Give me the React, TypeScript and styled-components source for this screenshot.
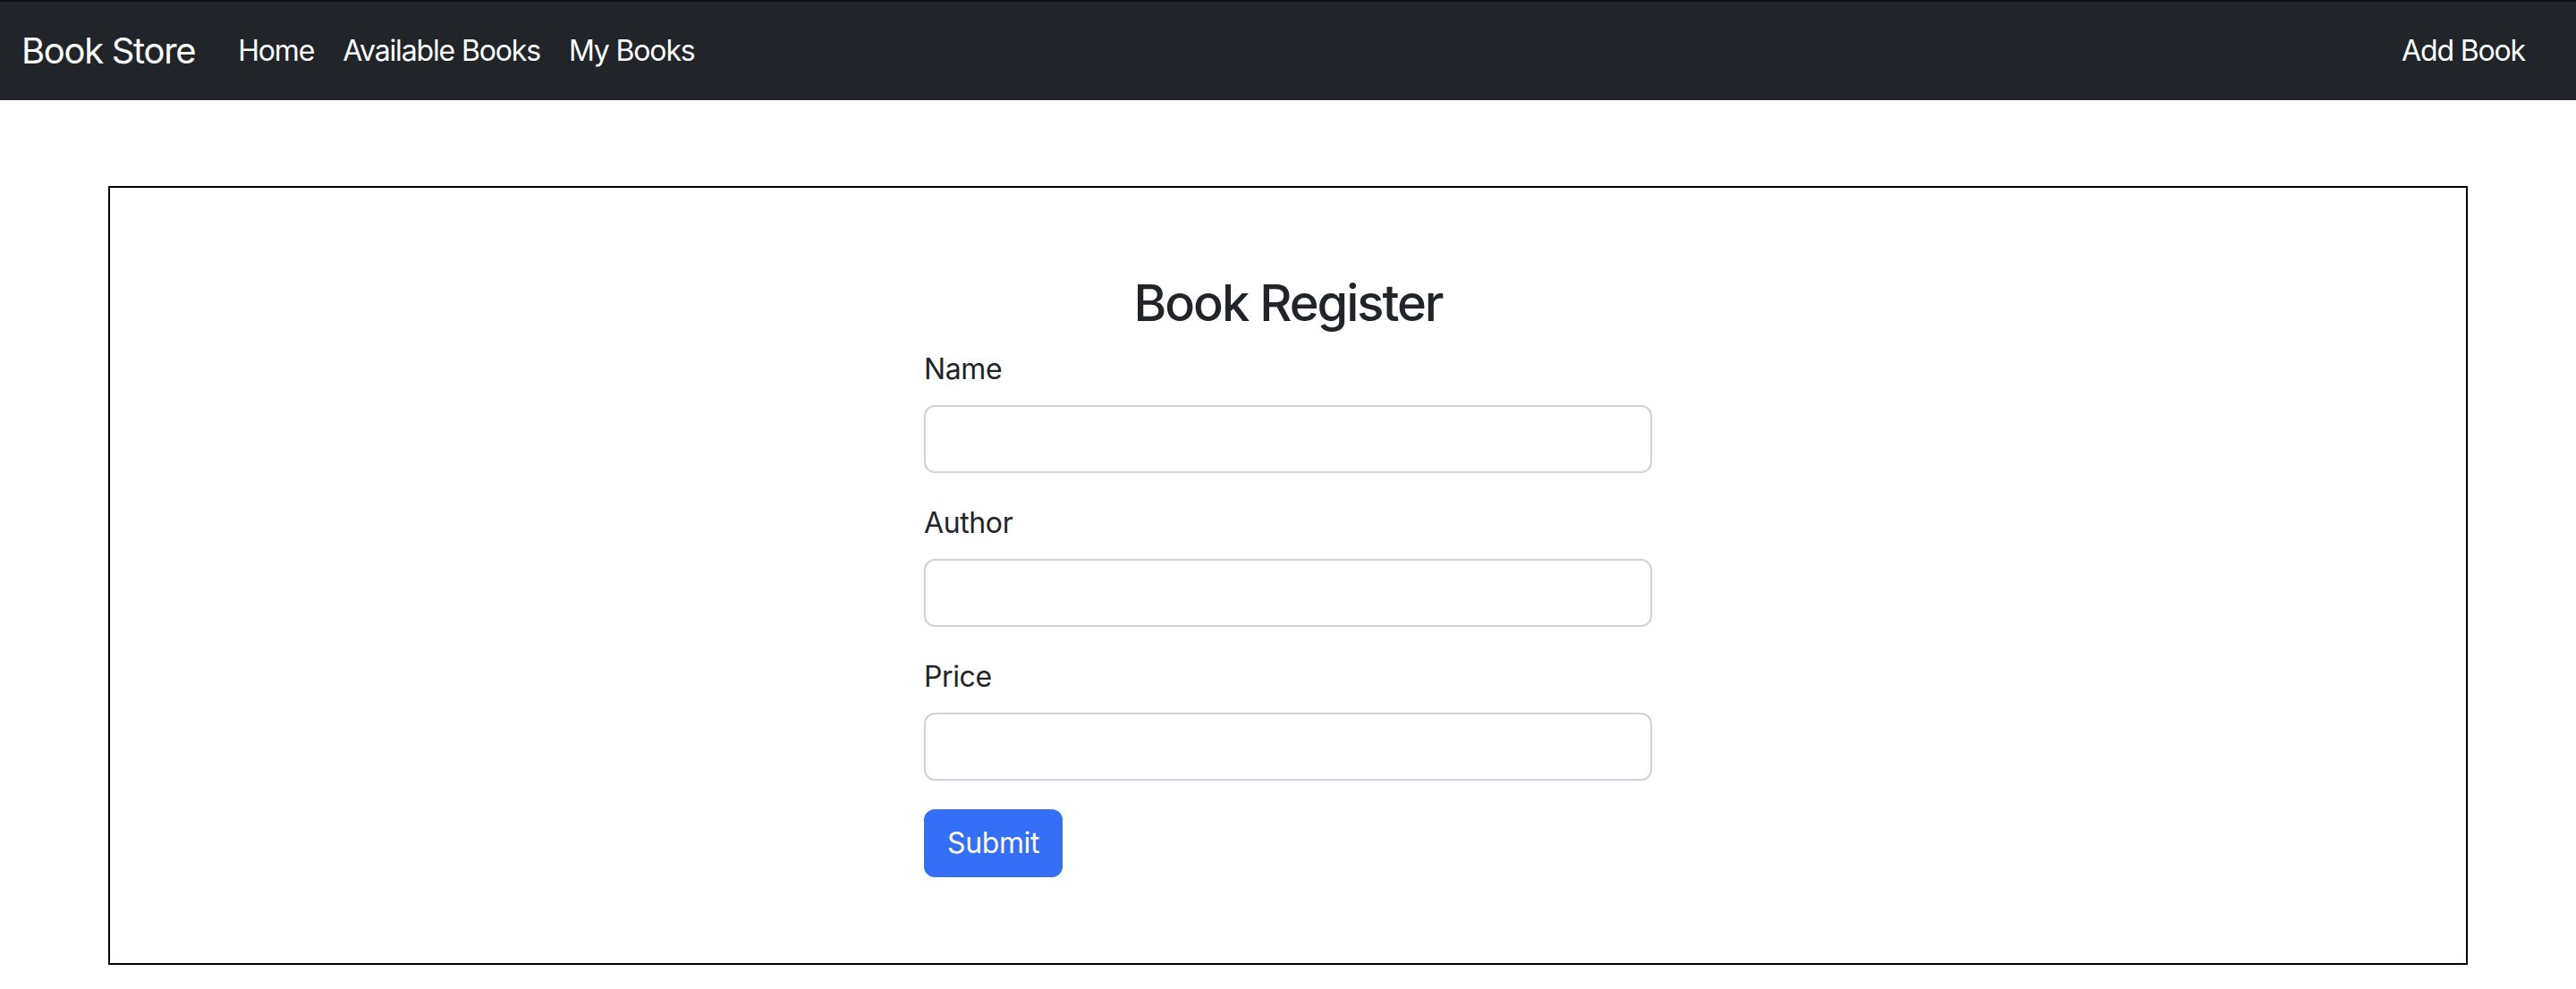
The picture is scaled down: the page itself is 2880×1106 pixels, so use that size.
import React from "react";
import styled, {createGlobalStyle} from "styled-components";

const GlobalStyle = createGlobalStyle`
  body {
    margin: 0;
    background: #fff;
    color: #212529;
    font-family: Inter, "Noto Sans", "Liberation Sans", sans-serif;
    letter-spacing: -0.024em;
  }
  * {
    box-sizing: border-box;
  }
`;

const NavbarSC = styled("nav")`
  height: 112px;
  background: #212529;
  border-top: 2px solid #101214;
  display: flex;
  align-items: center;
  padding: 0 24px;
`;

const BrandSC = styled("a")`
  font-size: 40px;
  line-height: 60px;
  letter-spacing: -0.033em;
  color: #fff;
  text-decoration: none;
  margin-right: 32px;
`;

const NavListSC = styled("ul")<{ $right?: boolean }>`
  display: flex;
  list-style: none;
  margin: 0;
  padding: 0;
  margin-left: ${p => (p.$right ? "auto" : "0")};
  margin-right: ${p => (p.$right ? "17px" : "0")};
`;

const NavLinkSC = styled("a")`
  display: block;
  padding: 16px;
  font-size: 32px;
  line-height: 48px;
  letter-spacing: -0.036em;
  color: #fff;
  text-decoration: none;
`;

const CardSC = styled("div")`
  width: 2638px;
  margin: 96px auto 0;
  border: 2px solid #000;
  padding: 96px;
  display: flex;
  justify-content: center;
`;

const FormSC = styled("form")`
  width: 814px;
`;

const TitleSC = styled("h3")`
  font-size: 56px;
  font-weight: 500;
  line-height: 1.2;
  letter-spacing: -0.036em;
  text-align: center;
  margin: 0 0 16px;
`;

const GroupSC = styled("div")`
  margin-bottom: 32px;
`;

const LabelSC = styled("label")`
  display: block;
  font-size: 32px;
  line-height: 48px;
  margin-bottom: 16px;
`;

const InputSC = styled("input")`
  display: block;
  width: 100%;
  height: 76px;
  border: 2px solid #ced4da;
  border-radius: 12px;
  padding: 12px 24px;
  font-size: 32px;
  font-family: inherit;
  color: #212529;
  outline: none;
`;

const SubmitSC = styled("button")`
  padding: 12px 24px;
  font-size: 32px;
  line-height: 48px;
  font-family: inherit;
  letter-spacing: inherit;
  color: #fff;
  background: #346ff5;
  border: 2px solid #346ff5;
  border-radius: 12px;
  cursor: pointer;
`;

const fields = ["Name", "Author", "Price"];

const App = () => {
  return (
    <>
      <GlobalStyle />
      <NavbarSC>
        <BrandSC href="#">Book Store</BrandSC>
        <NavListSC>
          <li><NavLinkSC href="#">Home</NavLinkSC></li>
          <li><NavLinkSC href="#">Available Books</NavLinkSC></li>
          <li><NavLinkSC href="#">My Books</NavLinkSC></li>
        </NavListSC>
        <NavListSC $right>
          <li><NavLinkSC href="#">Add Book</NavLinkSC></li>
        </NavListSC>
      </NavbarSC>
      <CardSC>
        <FormSC onSubmit={e => e.preventDefault()}>
          <TitleSC>Book Register</TitleSC>
          {fields.map(f => (
            <GroupSC key={f}>
              <LabelSC htmlFor={f}>{f}</LabelSC>
              <InputSC id={f} type="text" />
            </GroupSC>
          ))}
          <SubmitSC type="submit">Submit</SubmitSC>
        </FormSC>
      </CardSC>
    </>
  );
};

export default App;
